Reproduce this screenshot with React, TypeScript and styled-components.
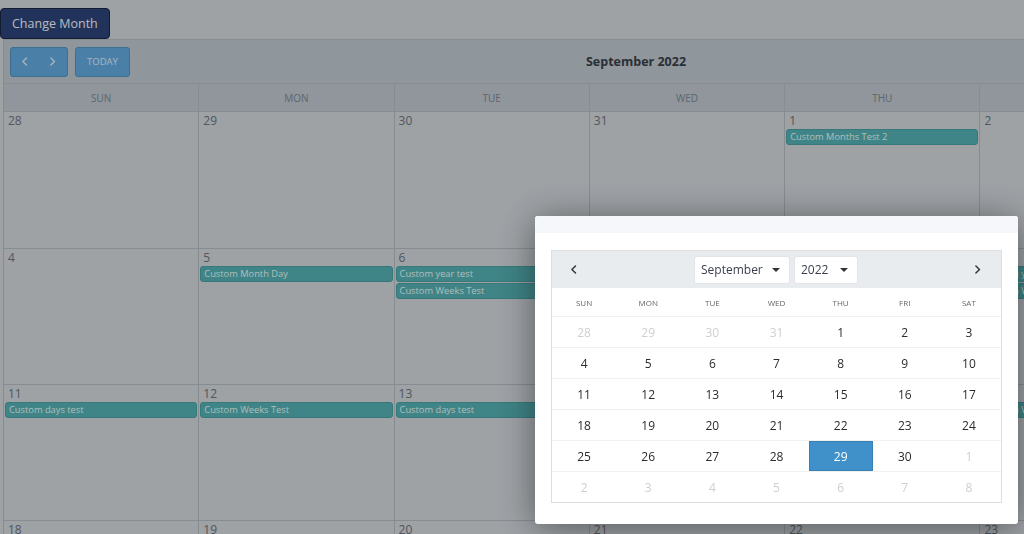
import React from "react";
import styled, { createGlobalStyle } from "styled-components";

const GlobalStyle = createGlobalStyle`
  html, body {
    margin: 0;
    padding: 0;
    overflow: hidden;
    background: #d3d8dd;
    font-family: "Open Sans", "Noto Sans", sans-serif;
  }
  * { box-sizing: border-box; }
`;

const Page = styled.div`
  padding-top: 8px;
  width: 1400px;
  height: 534px;
  background: #d3d8dd;
`;

const ChangeButton = styled.button`
  display: block;
  height: 31px;
  padding: 0 11px;
  margin: 0;
  border: 1px solid #182540;
  border-radius: 4px;
  background: #2d4578;
  color: #f2f6ff;
  font-family: inherit;
  font-size: 12.5px;
`;

const Calendar = styled.div`
  margin-left: 3px;
  width: 1368px;
  border-top: 1px solid #b4bbc0;
  border-left: 1px solid #b4bbc0;
`;

const Toolbar = styled.div`
  display: flex;
  align-items: center;
  height: 44px;
  padding: 0 7px 0 6px;
  background: #bfc8d0;
  border-bottom: 1px solid #b4bbc0;
`;

const NavPair = styled.div`
  display: flex;
  height: 30px;
  border: 1px solid #5294c5;
  border-radius: 3px;
  background: #63aae0;
  overflow: hidden;
`;

const NavButton = styled.button`
  display: flex;
  align-items: center;
  justify-content: center;
  width: 28px;
  height: 100%;
  margin: 0;
  padding: 0;
  border: 0;
  background: transparent;
  color: #e2f0fa;
`;

const TodayButton = styled.button`
  height: 30px;
  width: 55px;
  margin: 0 0 0 7px;
  padding: 0;
  border: 1px solid #5294c5;
  border-radius: 3px;
  background: #63aae0;
  color: #e2f0fa;
  font-family: inherit;
  font-size: 9.5px;
  text-transform: uppercase;
`;

const Title = styled.h2`
  flex: 1;
  margin: 0;
  text-align: center;
  font-size: 12.5px;
  font-weight: 700;
  color: #383f47;
`;

const ToolbarSide = styled.div`
  width: 222px;
`;

const HeaderRow = styled.div`
  display: grid;
  grid-template-columns: repeat(7, 1fr);
  height: 28px;
  background: #c0c9d0;
  border-bottom: 1px solid #b4bbc0;
`;

const HeaderCell = styled.div`
  display: flex;
  align-items: center;
  justify-content: center;
  font-size: 10px;
  color: #7d8890;
  border-right: 1px solid #b4bbc0;
`;

const WeekRow = styled.div<{ $h: number }>`
  display: grid;
  grid-template-columns: repeat(7, 1fr);
  height: ${(p) => p.$h}px;
  border-bottom: 1px solid #b4bbc0;
`;

const DayCell = styled.div`
  display: flex;
  flex-direction: column;
  gap: 1px;
  padding: 0 1px;
  border-right: 1px solid #b4bbc0;
  min-width: 0;
`;

const DayNumber = styled.div`
  padding: 2px 3px 0;
  height: 16px;
  font-size: 12px;
  line-height: 14px;
  color: #6b737b;
`;

const Event = styled.div`
  height: 16px;
  padding: 0 3px;
  border: 1px solid #4aa2a5;
  border-radius: 3px;
  background: #55b0b3;
  color: #e6fcfc;
  font-size: 9.3px;
  line-height: 14px;
  white-space: nowrap;
  overflow: hidden;
`;

const Backdrop = styled.div`
  position: fixed;
  inset: 0;
  background: rgba(0, 0, 0, 0.25);
`;

const Modal = styled.div`
  position: fixed;
  left: 535px;
  top: 216px;
  width: 483px;
  height: 308px;
  background: #ffffff;
  border-radius: 3px;
  box-shadow: 0 4px 36px rgba(0, 0, 0, 0.45);
  overflow: hidden;
`;

const ModalHeader = styled.div`
  height: 17px;
  background: #f5f7fa;
`;

const ModalBody = styled.div`
  padding: 17px 16px 21px;
`;

const Picker = styled.div`
  border: 1px solid #dedede;
  width: 451px;
`;

const PickerHead = styled.div`
  display: flex;
  align-items: center;
  height: 37px;
  padding: 0 17px 0 16px;
  background: #e9ecef;
`;

const ArrowButton = styled.button`
  display: flex;
  align-items: center;
  justify-content: center;
  width: 12px;
  height: 20px;
  padding: 0;
  border: 0;
  background: transparent;
  color: #333;
`;

const SelectGroup = styled.div`
  flex: 1;
  display: flex;
  justify-content: center;
  gap: 4px;
`;

const Select = styled.div<{ $w: number }>`
  display: flex;
  align-items: center;
  justify-content: space-between;
  width: ${(p) => p.$w}px;
  height: 28px;
  padding: 0 9px 0 6px;
  background: #ffffff;
  border: 1px solid #e2e4e7;
  border-radius: 3px;
  font-size: 12px;
  color: #3a3f4d;
`;

const Caret = styled.span`
  width: 0;
  height: 0;
  border-left: 4px solid transparent;
  border-right: 4px solid transparent;
  border-top: 4px solid #333;
`;

const PickerGrid = styled.div`
  display: grid;
  grid-template-columns: repeat(7, 1fr);
`;

const PickerDayName = styled.div`
  display: flex;
  align-items: center;
  justify-content: center;
  height: 28px;
  font-size: 8px;
  color: #666;
  text-transform: uppercase;
`;

const PickerDay = styled.div<{ $muted?: boolean; $active?: boolean }>`
  display: flex;
  align-items: center;
  justify-content: center;
  height: 31px;
  border-top: 1px solid #f1f1f1;
  font-size: 12px;
  color: ${(p) => (p.$active ? "#ffffff" : p.$muted ? "#cfcfcf" : "#2b2b2b")};
  background: ${(p) => (p.$active ? "#4091c9" : "transparent")};
  box-shadow: ${(p) => (p.$active ? "inset 0 0 0 1px #3680b6" : "none")};
`;

const Chevron = ({ dir, size = 8, stroke = 1.8 }: { dir: "l" | "r"; size?: number; stroke?: number }) => (
  <svg width={size * 0.6} height={size} viewBox="0 0 6 10" fill="none">
    <path
      d={dir === "l" ? "M5 1 L1 5 L5 9" : "M1 1 L5 5 L1 9"}
      stroke="currentColor"
      strokeWidth={stroke}
      strokeLinecap="round"
      strokeLinejoin="round"
    />
  </svg>
);

const dayNames = ["SUN", "MON", "TUE", "WED", "THU", "FRI", "SAT"];

type Week = { days: number[]; events: Record<number, string[]>; h: number };

const weeks: Week[] = [
  { days: [28, 29, 30, 31, 1, 2, 3], events: { 4: ["Custom Months Test 2"] }, h: 137 },
  {
    days: [4, 5, 6, 7, 8, 9, 10],
    events: {
      1: ["Custom Month Day"],
      2: ["Custom year test", "Custom Weeks Test"],
      5: ["Custom year test", "Custom Weeks Test"],
    },
    h: 136,
  },
  {
    days: [11, 12, 13, 14, 15, 16, 17],
    events: {
      0: ["Custom days test"],
      1: ["Custom Weeks Test"],
      2: ["Custom days test"],
      5: ["Custom Weeks Test"],
    },
    h: 136,
  },
  { days: [18, 19, 20, 21, 22, 23, 24], events: {}, h: 136 },
];

const pickerDays: { n: number; muted?: boolean; active?: boolean }[] = [
  ...[28, 29, 30, 31].map((n) => ({ n, muted: true })),
  ...Array.from({ length: 30 }, (_, i) => ({ n: i + 1, active: i + 1 === 29 })),
  ...[1, 2, 3, 4, 5, 6, 7, 8].map((n) => ({ n, muted: true })),
];

export default function App() {
  return (
    <>
      <GlobalStyle />
      <Page>
        <ChangeButton>Change Month</ChangeButton>
        <Calendar>
          <Toolbar>
            <NavPair>
              <NavButton aria-label="prev">
                <Chevron dir="l" size={9} stroke={1.5} />
              </NavButton>
              <NavButton aria-label="next">
                <Chevron dir="r" size={9} stroke={1.5} />
              </NavButton>
            </NavPair>
            <TodayButton>today</TodayButton>
            <Title>September 2022</Title>
            <ToolbarSide />
          </Toolbar>
          <HeaderRow>
            {dayNames.map((d) => (
              <HeaderCell key={d}>{d}</HeaderCell>
            ))}
          </HeaderRow>
          {weeks.map((w, wi) => (
            <WeekRow key={wi} $h={w.h}>
              {w.days.map((d, di) => (
                <DayCell key={di}>
                  <DayNumber>{d}</DayNumber>
                  {(w.events[di] || []).map((e, ei) => (
                    <Event key={ei}>{e}</Event>
                  ))}
                </DayCell>
              ))}
            </WeekRow>
          ))}
        </Calendar>
      </Page>
      <Backdrop />
      <Modal>
        <ModalHeader />
        <ModalBody>
          <Picker>
            <PickerHead>
              <ArrowButton aria-label="previous month">
                <Chevron dir="l" size={9} stroke={1.6} />
              </ArrowButton>
              <SelectGroup>
                <Select $w={96}>
                  September
                  <Caret />
                </Select>
                <Select $w={64}>
                  2022
                  <Caret />
                </Select>
              </SelectGroup>
              <ArrowButton aria-label="next month">
                <Chevron dir="r" size={9} stroke={1.6} />
              </ArrowButton>
            </PickerHead>
            <PickerGrid>
              {dayNames.map((d) => (
                <PickerDayName key={d}>{d}</PickerDayName>
              ))}
              {pickerDays.map((d, i) => (
                <PickerDay key={i} $muted={d.muted} $active={d.active}>
                  {d.n}
                </PickerDay>
              ))}
            </PickerGrid>
          </Picker>
        </ModalBody>
      </Modal>
    </>
  );
}
